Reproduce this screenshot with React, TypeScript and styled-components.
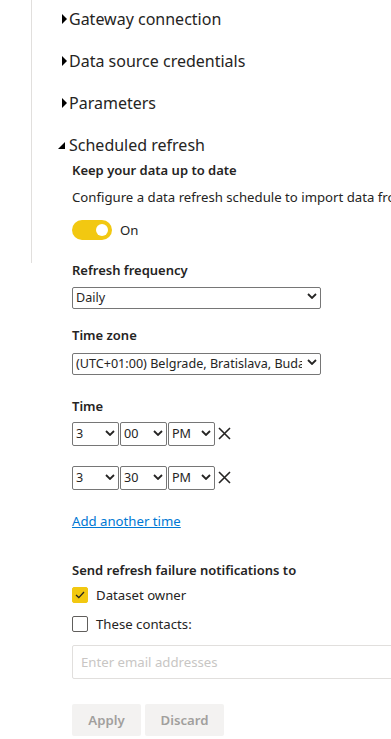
import React, { useState } from "react";
import styled, { createGlobalStyle } from "styled-components";

const FONT = `"Segoe UI", "Noto Sans", "Open Sans", sans-serif`;

const GlobalStyle = createGlobalStyle`
  html, body {
    margin: 0;
    padding: 0;
    background: #ffffff;
    overflow: hidden;
  }
  body {
    font-family: ${FONT};
    color: #252423;
  }
`;

const Page = styled.div`
  display: flex;
  width: 391px;
  height: 739px;
  overflow: hidden;
`;

const Rail = styled.div`
  width: 31px;
  flex-shrink: 0;
  align-self: flex-start;
  height: 263px;
  border-right: 1px solid #e1dfdd;
`;

const Content = styled.div`
  flex: 1;
  padding: 7px 0 0 29px;
  min-width: 0;
`;

const SectionHeader = styled.div`
  display: flex;
  align-items: center;
  height: 24px;
  margin-bottom: 18px;
  font-size: 16px;
  color: #252423;
  white-space: nowrap;
`;

const Caret = styled.span<{ $open?: boolean }>`
  display: inline-flex;
  width: 7px;
  justify-content: center;
  margin-left: ${(p) => (p.$open ? -3 : 0)}px;
  margin-right: ${(p) => (p.$open ? 4 : 1)}px;
  svg {
    display: block;
  }
`;

const Panel = styled.div`
  margin-top: -18px;
  padding-left: 11px;
`;

const BoldLabel = styled.div<{ $top?: number }>`
  font-size: 13px;
  font-weight: 600;
  line-height: 20px;
  margin-top: ${(p) => p.$top ?? 0}px;
  white-space: nowrap;
`;

const Text = styled.div`
  font-size: 13.2px;
  line-height: 20px;
  margin-top: 7px;
  white-space: nowrap;
`;

const ToggleRow = styled.div`
  display: flex;
  align-items: center;
  gap: 8px;
  margin-top: 13px;
  font-size: 13.2px;
`;

const Track = styled.button<{ $on: boolean }>`
  width: 40px;
  height: 20px;
  border-radius: 10px;
  border: none;
  padding: 0;
  background: ${(p) => (p.$on ? "#f2c811" : "#c8c6c4")};
  display: flex;
  align-items: center;
  justify-content: ${(p) => (p.$on ? "flex-end" : "flex-start")};
  cursor: pointer;
`;

const Knob = styled.span`
  width: 12px;
  height: 12px;
  border-radius: 50%;
  background: #ffffff;
  margin: 0 4px;
`;

const SelectWrap = styled.div<{ $width: number; $top?: number }>`
  position: relative;
  width: ${(p) => p.$width}px;
  height: ${(p) => (p.$width > 100 ? 22 : 24)}px;
  margin-top: ${(p) => p.$top ?? 0}px;
  flex-shrink: 0;
`;

const NativeSelect = styled.select`
  appearance: none;
  -webkit-appearance: none;
  width: 100%;
  height: 100%;
  box-sizing: border-box;
  border: 1px solid #767676;
  border-radius: 2px;
  background: #ffffff;
  font-family: ${FONT};
  font-size: 12.6px;
  color: #252423;
  padding: 0 18px 0 3px;
  text-overflow: clip;
  white-space: nowrap;
  overflow: hidden;
`;

const Chevron = styled.span`
  position: absolute;
  right: 4px;
  top: 50%;
  transform: translateY(-50%);
  pointer-events: none;
  display: flex;
`;

const TimeRow = styled.div<{ $top: number }>`
  display: flex;
  align-items: center;
  gap: 1px;
  margin-top: ${(p) => p.$top}px;
`;

const RemoveButton = styled.button`
  border: none;
  background: none;
  padding: 0 0 0 2px;
  display: flex;
  cursor: pointer;
`;

const Link = styled.a`
  display: inline-block;
  margin-top: 22px;
  font-size: 13.2px;
  line-height: 20px;
  color: #0078d4;
  text-decoration: underline;
  cursor: pointer;
`;

const CheckRow = styled.label<{ $top: number }>`
  display: flex;
  align-items: center;
  gap: 8px;
  margin-top: ${(p) => p.$top}px;
  font-size: 13.2px;
  cursor: pointer;
`;

const Box = styled.span<{ $checked: boolean }>`
  width: 16px;
  height: 16px;
  box-sizing: border-box;
  border-radius: 2px;
  border: 1px solid ${(p) => (p.$checked ? "#f2c811" : "#605e5c")};
  background: ${(p) => (p.$checked ? "#f2c811" : "#ffffff")};
  display: flex;
  align-items: center;
  justify-content: center;
`;

const EmailInput = styled.input`
  display: block;
  margin-top: 12px;
  width: 340px;
  height: 34px;
  box-sizing: border-box;
  border: 1px solid #e1dfdd;
  border-radius: 2px;
  padding: 0 8px;
  font-family: ${FONT};
  font-size: 13.2px;
  color: #252423;
  &::placeholder {
    color: #c8c6c4;
  }
`;

const Actions = styled.div`
  display: flex;
  gap: 4px;
  margin-top: 25px;
`;

const ActionButton = styled.button<{ $width: number }>`
  width: ${(p) => p.$width}px;
  height: 32px;
  border: none;
  border-radius: 2px;
  background: #f3f2f1;
  color: #a19f9d;
  font-family: ${FONT};
  font-size: 13.2px;
  font-weight: 600;
`;

const ChevronIcon = () => (
  <svg width="10" height="6" viewBox="0 0 10 6">
    <path d="M1 1 L5 5 L9 1" fill="none" stroke="#252423" strokeWidth="1.8" />
  </svg>
);

type SelectProps = { width: number; value: string; options: string[]; top?: number };

const Select = ({ width, value, options, top }: SelectProps) => (
  <SelectWrap $width={width} $top={top}>
    <NativeSelect defaultValue={value}>
      {options.map((o) => (
        <option key={o}>{o}</option>
      ))}
    </NativeSelect>
    <Chevron>
      <ChevronIcon />
    </Chevron>
  </SelectWrap>
);

const hours = Array.from({ length: 12 }, (_, i) => String(i + 1));
const minutes = ["00", "30"];
const zone = "(UTC+01:00) Belgrade, Bratislava, Budapest, Ljubljana, Prague";

const TimeSlot = ({ hour, minute, top }: { hour: string; minute: string; top: number }) => (
  <TimeRow $top={top}>
    <Select width={47} value={hour} options={hours} />
    <Select width={47} value={minute} options={minutes} />
    <Select width={47} value="PM" options={["AM", "PM"]} />
    <RemoveButton aria-label="Remove">
      <svg width="13" height="13" viewBox="0 0 13 13">
        <path d="M1 1 L12 12 M12 1 L1 12" stroke="#252423" strokeWidth="1.6" />
      </svg>
    </RemoveButton>
  </TimeRow>
);

const Section = ({ title, open }: { title: string; open?: boolean }) => (
  <SectionHeader>
    <Caret $open={open}>
      {open ? (
        <svg width="7" height="7" viewBox="0 0 7 7">
          <path d="M7 0 L7 7 L0 7 Z" fill="#000" />
        </svg>
      ) : (
        <svg width="5" height="10" viewBox="0 0 5 10">
          <path d="M0 0 L5 5 L0 10 Z" fill="#000" />
        </svg>
      )}
    </Caret>
    {title}
  </SectionHeader>
);

export default function App() {
  const [on, setOn] = useState(true);
  const [owner, setOwner] = useState(true);
  const [contacts, setContacts] = useState(false);

  return (
    <>
      <GlobalStyle />
      <Page>
        <Rail />
        <Content>
          <Section title="Gateway connection" />
          <Section title="Data source credentials" />
          <Section title="Parameters" />
          <Section title="Scheduled refresh" open />
          <Panel>
            <BoldLabel $top={21}>Keep your data up to date</BoldLabel>
            <Text>Configure a data refresh schedule to import data from the data source into the dataset.</Text>
            <ToggleRow>
              <Track $on={on} onClick={() => setOn(!on)}>
                <Knob />
              </Track>
              On
            </ToggleRow>
            <BoldLabel $top={20}>Refresh frequency</BoldLabel>
            <Select width={249} value="Daily" options={["Daily", "Weekly"]} top={5} />
            <BoldLabel $top={18}>Time zone</BoldLabel>
            <Select width={249} value={zone} options={[zone]} top={6} />
            <BoldLabel $top={23}>Time</BoldLabel>
            <TimeSlot hour="3" minute="00" top={5} />
            <TimeSlot hour="3" minute="30" top={20} />
            <Link>Add another time</Link>
            <BoldLabel $top={29}>Send refresh failure notifications to</BoldLabel>
            <CheckRow $top={6} onClick={() => setOwner(!owner)}>
              <Box $checked={owner}>
                {owner && (
                  <svg width="10" height="8" viewBox="0 0 10 8">
                    <path d="M1 4 L3.8 6.6 L9 1" fill="none" stroke="#252423" strokeWidth="1.3" />
                  </svg>
                )}
              </Box>
              Dataset owner
            </CheckRow>
            <CheckRow $top={11} onClick={() => setContacts(!contacts)}>
              <Box $checked={contacts} />
              These contacts:
            </CheckRow>
            <EmailInput placeholder="Enter email addresses" />
            <Actions>
              <ActionButton $width={69}>Apply</ActionButton>
              <ActionButton $width={79}>Discard</ActionButton>
            </Actions>
          </Panel>
        </Content>
      </Page>
    </>
  );
}
